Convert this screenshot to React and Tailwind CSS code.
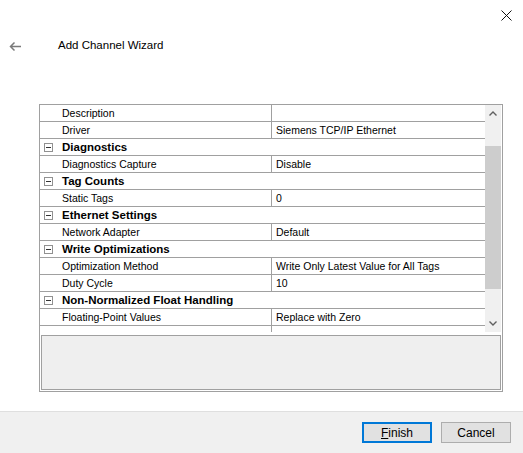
import React from 'react';

const rows = [
    { label: 'Description', value: '' },
    { label: 'Driver', value: 'Siemens TCP/IP Ethernet' },
    { group: 'Diagnostics' },
    { label: 'Diagnostics Capture', value: 'Disable' },
    { group: 'Tag Counts' },
    { label: 'Static Tags', value: '0' },
    { group: 'Ethernet Settings' },
    { label: 'Network Adapter', value: 'Default' },
    { group: 'Write Optimizations' },
    { label: 'Optimization Method', value: 'Write Only Latest Value for All Tags' },
    { label: 'Duty Cycle', value: '10' },
    { group: 'Non-Normalized Float Handling' },
    { label: 'Floating-Point Values', value: 'Replace with Zero' },
];

const MinusBox = () => (
    <div className="ml-[4px] w-[9px] h-[9px] border border-[#919191] bg-white flex items-center justify-center">
        <div className="w-[5px] h-px bg-[#333]" />
    </div>
);

const Chevron = ({ up }) => (
    <svg width="8" height="5" viewBox="0 0 8 5" className={up ? '' : 'rotate-180'}>
        <path d="M0.5 4.5 L4 1 L7.5 4.5" fill="none" stroke="#606060" strokeWidth="1.4" />
    </svg>
);

function PropertyRow({ row }) {
    if (row.group) {
        return (
            <div className="h-[17px] border-b border-[#a0a0a0] flex items-center">
                <MinusBox />
                <span className="ml-[9px] pt-px text-[11.5px] font-bold text-black">{row.group}</span>
            </div>
        );
    }
    return (
        <div className="h-[17px] border-b border-[#a0a0a0] flex items-center text-[10.5px] text-black">
            <div className="w-[232px] h-full border-r border-[#a0a0a0] pl-[22px] pt-px flex items-center">{row.label}</div>
            <div className="pl-[4px] pt-px">{row.value}</div>
        </div>
    );
}

export default function App() {
    return (
        <div className="w-[523px] h-[453px] bg-white flex flex-col font-['Liberation_Sans',Arial,sans-serif] overflow-hidden">
            <div className="h-[30px] flex justify-end pt-[10px] pr-[11px]">
                <svg width="11" height="11" viewBox="0 0 11 11">
                    <path d="M0.5 0.5 L10.5 10.5 M10.5 0.5 L0.5 10.5" stroke="#111" strokeWidth="1" />
                </svg>
            </div>

            <div className="h-[30px] flex items-center pt-[2px]">
                <svg width="13" height="11" viewBox="0 0 13 11" className="ml-[9px]">
                    <path d="M12 5.5 H1.5 M5.5 1.5 L1.5 5.5 L5.5 9.5" fill="none" stroke="#7a7a7a" strokeWidth="1.5" />
                </svg>
                <span className="ml-[36px] text-[11.5px] text-black">Add Channel Wizard</span>
            </div>

            <div className="mt-[44px] ml-[39px] w-[464px] h-[288px] border border-[#a0a0a0] flex flex-col">
                <div className="h-[227px] flex">
                    <div className="w-[445px] flex flex-col">
                        {rows.map((row, i) => (
                            <PropertyRow key={i} row={row} />
                        ))}
                        <div className="h-[6px] flex">
                            <div className="w-[232px] border-r border-[#a0a0a0]" />
                        </div>
                    </div>
                    <div className="w-[16px] bg-[#f0f0f0] flex flex-col">
                        <div className="h-[17px] flex items-center justify-center">
                            <Chevron up />
                        </div>
                        <div className="h-[24px]" />
                        <div className="h-[143px] bg-[#cdcdcd]" />
                        <div className="flex-1" />
                        <div className="h-[17px] flex items-center justify-center">
                            <Chevron />
                        </div>
                    </div>
                </div>
                <div className="mx-px mt-[3px] h-[55px] border border-[#a0a0a0] bg-[#efefef]" />
            </div>

            <div className="flex-1" />

            <div className="h-[42px] border-t border-[#dfdfdf] bg-[#f0f0f0] flex justify-end items-start pt-[10px] pr-[12px] gap-[9px] text-[12px] text-black">
                <button className="w-[70px] h-[21px] border-2 border-[#0078d7] bg-[#e1e1e1] flex items-center justify-center">
                    <span><span className="underline">F</span>inish</span>
                </button>
                <button className="w-[70px] h-[21px] border border-[#adadad] bg-[#e1e1e1] flex items-center justify-center">
                    Cancel
                </button>
            </div>
        </div>
    );
}
